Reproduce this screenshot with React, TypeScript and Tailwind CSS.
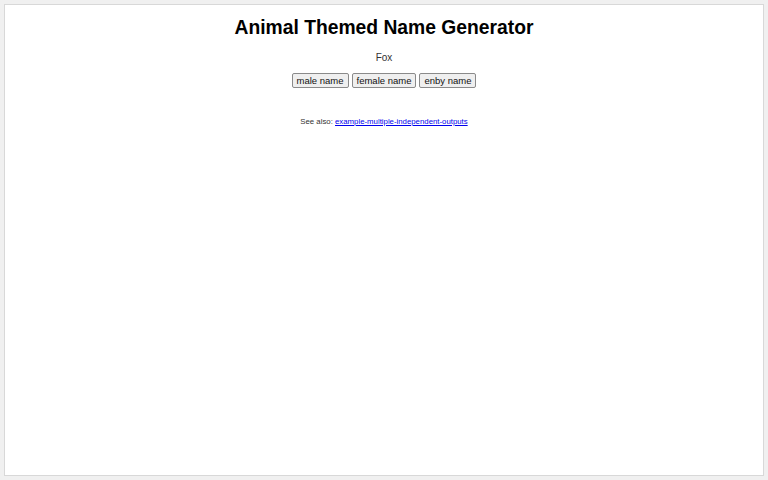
export default function App() {
  return (
    <div
      className="h-[480px] w-[768px] bg-[#f0f0f0] p-[4px]"
      style={{ fontFamily: "'Liberation Sans', Arial, sans-serif" }}
    >
      <div className="flex h-full flex-col items-center border border-[#d8d8d8] bg-white">
        <h1 className="mt-[10px] text-[19.3px] font-bold leading-[26px] text-black">
          Animal Themed Name Generator
        </h1>
        <div className="mt-[11px] text-[10px] leading-[12px] text-[#333]">Fox</div>
        <div className="mt-[9px] flex gap-[3px]">
          {["male name", "female name", "enby name"].map((label) => (
            <button
              key={label}
              className="h-[15px] rounded-[2px] border border-[#8a8a8a] bg-[#efefef] px-[4px] text-[9.5px] leading-[13px] text-[#111]"
            >
              {label}
            </button>
          ))}
        </div>
        <div className="mt-[29px] text-[7.8px] leading-[10px] text-[#333]">
          See also:{" "}
          <a href="#" className="text-[#0000ee] underline">
            example-multiple-independent-outputs
          </a>
        </div>
      </div>
    </div>
  );
}
